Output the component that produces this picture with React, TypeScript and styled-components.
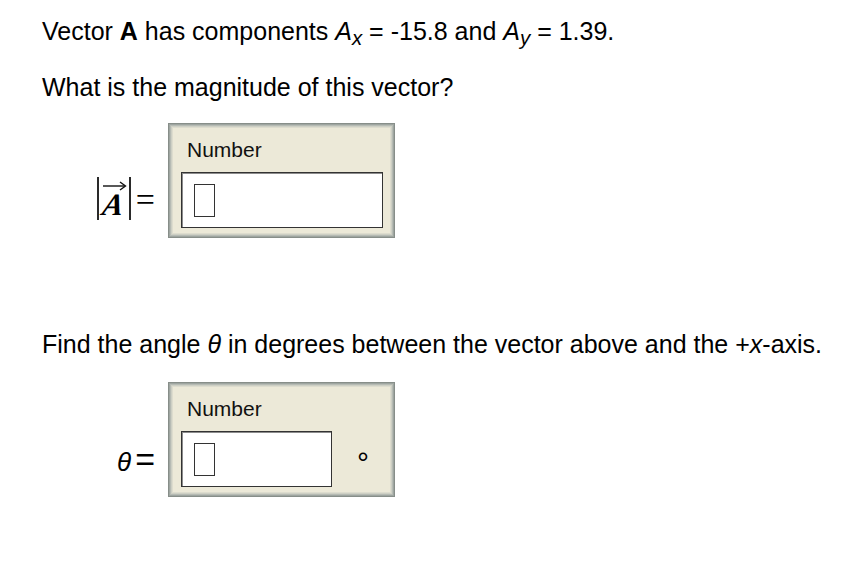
import React from "react";
import styled, { createGlobalStyle } from "styled-components";

const GlobalStyle = createGlobalStyle`
  html, body {
    margin: 0;
    padding: 0;
    background: #ffffff;
  }
  body {
    font-family: "Liberation Sans", Arial, sans-serif;
    color: #000;
  }
`;

const Page = styled.div`
  padding: 17px 0 0 42px;
  width: 844px;
  height: 566px;
  box-sizing: border-box;
`;

const Para = styled.p<{ $gap: number }>`
  margin: ${({ $gap }) => $gap}px 0 0;
  font-size: 25px;
  line-height: 28px;
  white-space: nowrap;
`;

const Sub = styled.sub`
  font-size: 0.82em;
  font-style: italic;
  vertical-align: -0.22em;
  line-height: 0;
`;

const AnswerRow = styled.div<{ $gap: number }>`
  display: flex;
  align-items: flex-end;
  margin-top: ${({ $gap }) => $gap}px;
`;

const LabelCell = styled.div`
  width: 126px;
  height: 56px;
  margin-bottom: 10px;
  padding-right: 13px;
  box-sizing: border-box;
  display: flex;
  align-items: center;
  justify-content: flex-end;
`;

const Panel = styled.div`
  width: 227px;
  height: 115px;
  box-sizing: border-box;
  border: 1px solid #878e89;
  background: #ece9d8;
  box-shadow: inset 0 0 0 1px #9ea5a0, inset 0 0 0 2px #b6bbb4,
    inset 0 0 0 3px #cdcfc4, inset 0 0 0 4px #dddcce;
  padding: 14px 11px 0 12px;
`;

const PanelTitle = styled.div`
  font-size: 21px;
  line-height: 24px;
  padding-left: 6px;
  color: #111;
`;

const InputLine = styled.div`
  display: flex;
  align-items: center;
  margin-top: 10px;
`;

const Field = styled.div<{ $width: number }>`
  width: ${({ $width }) => $width}px;
  height: 56px;
  box-sizing: border-box;
  background: #fff;
  border: 1px solid #333;
  box-shadow: inset 1px 1px 0 #8c8c8c;
  padding: 11px 0 0 12px;
`;

const Caret = styled.div`
  width: 21px;
  height: 33px;
  box-sizing: border-box;
  border: 1px solid #333;
`;

const Unit = styled.span`
  font-size: 30px;
  line-height: 20px;
  margin-left: 25px;
  padding-top: 7px;
`;

const Abs = styled.span`
  position: relative;
  display: inline-flex;
  align-items: flex-end;
  justify-content: center;
  width: 30px;
  height: 43px;
  border-left: 2px solid #2a2a2a;
  border-right: 2px solid #2a2a2a;
  box-sizing: content-box;
  margin-bottom: 4px;
`;

const VecLetter = styled.span`
  display: inline-block;
  font-family: "Liberation Serif", "Times New Roman", serif;
  font-weight: bold;
  font-style: italic;
  font-size: 31px;
  line-height: 31px;
  margin-left: -1px;
  transform: skewX(-10deg);
`;

const Arrow = styled.svg`
  position: absolute;
  left: 3px;
  top: 4px;
`;

const Equals = styled.span<{ $serif?: boolean }>`
  font-family: ${({ $serif }) =>
    $serif ? `"Liberation Serif", "Times New Roman", serif` : `"Liberation Sans", Arial, sans-serif`};
  font-size: 34px;
  line-height: 30px;
  margin-left: ${({ $serif }) => ($serif ? 5 : 4)}px;
`;

const Theta = styled.span`
  font-style: italic;
  font-size: 26px;
  line-height: 30px;
  margin-top: 6px;
`;

function VectorArrow() {
  return (
    <Arrow width="25" height="10" viewBox="0 0 25 10">
      <line x1="1" y1="5" x2="23" y2="5" stroke="#111" strokeWidth="1.4" />
      <polyline points="18,1 23.5,5 18,9" fill="none" stroke="#111" strokeWidth="1.4" />
    </Arrow>
  );
}

function NumberPanel({ width, unit }: { width: number; unit?: string }) {
  return (
    <Panel>
      <PanelTitle>Number</PanelTitle>
      <InputLine>
        <Field $width={width}>
          <Caret />
        </Field>
        {unit && <Unit>{unit}</Unit>}
      </InputLine>
    </Panel>
  );
}

export default function App() {
  return (
    <Page>
      <GlobalStyle />
      <Para $gap={0}>
        Vector <b>A</b> has components <i>A</i>
        <Sub>x</Sub> = -15.8 and <i>A</i>
        <Sub>y</Sub> = 1.39.
      </Para>
      <Para $gap={28}>What is the magnitude of this vector?</Para>
      <AnswerRow $gap={22}>
        <LabelCell>
          <Abs>
            <VectorArrow />
            <VecLetter>A</VecLetter>
          </Abs>
          <Equals $serif>=</Equals>
        </LabelCell>
        <NumberPanel width={202} />
      </AnswerRow>
      <Para $gap={92}>
        Find the angle <i>θ</i> in degrees between the vector above and the +<i>x</i>-axis.
      </Para>
      <AnswerRow $gap={24}>
        <LabelCell>
          <Theta>θ</Theta>
          <Equals>=</Equals>
        </LabelCell>
        <NumberPanel width={151} unit="°" />
      </AnswerRow>
    </Page>
  );
}
